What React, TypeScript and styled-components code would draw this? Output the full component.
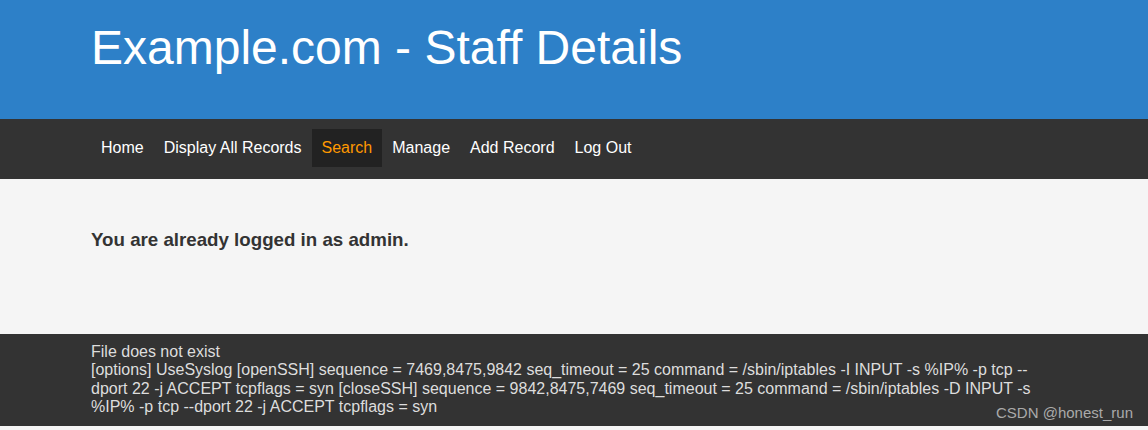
import styled, { createGlobalStyle } from "styled-components";

const GlobalStyle = createGlobalStyle`
  html, body {
    margin: 0;
    padding: 0;
    background: #f5f5f5;
    font-family: "Liberation Sans", Arial, sans-serif;
  }
`;

const Page = styled.div({
  position: "relative",
  minHeight: "430px",
  background: "#f5f5f5",
});

const Container = styled.div({
  padding: "0 90px 0 91px",
});

const Header = styled.header({
  background: "#2d80c8",
  height: "119px",
  boxSizing: "border-box",
  paddingTop: "20px",
});

const Title = styled.h1({
  margin: 0,
  color: "#fff",
  fontSize: "48px",
  fontWeight: "normal",
  lineHeight: "56px",
});

const Nav = styled.nav({
  background: "#333",
  height: "60px",
  boxSizing: "border-box",
  paddingTop: "10px",
});

const NavList = styled.ul({
  listStyle: "none",
  margin: 0,
  padding: 0,
  display: "flex",
});

const NavLink = styled.a<{ $active?: boolean }>`
  display: block;
  padding: 10px 10px;
  line-height: 18px;
  font-size: 16px;
  text-decoration: none;
  color: ${(p) => (p.$active ? "#ff9900" : "#fff")};
  background: ${(p) => (p.$active ? "#222" : "transparent")};
`;

const Main = styled.main({
  height: "155px",
  boxSizing: "border-box",
  paddingTop: "50px",
});

const Message = styled.h3({
  margin: 0,
  fontSize: "18.72px",
  lineHeight: "22px",
  fontWeight: "bold",
  color: "#333",
});

const Footer = styled.footer({
  background: "#333",
  color: "#ddd",
  fontSize: "16px",
  lineHeight: "18.4px",
  padding: "9px 0 9px",
});

const Watermark = styled.span({
  position: "absolute",
  right: "15px",
  bottom: "9px",
  color: "#aaa",
  fontSize: "15px",
  fontFamily: '"Liberation Sans", Arial, sans-serif',
});

const links = ["Home", "Display All Records", "Search", "Manage", "Add Record", "Log Out"];

export default function App() {
  return (
    <Page>
      <GlobalStyle />
      <Header>
        <Container>
          <Title>Example.com - Staff Details</Title>
        </Container>
      </Header>
      <Nav>
        <Container>
          <NavList>
            {links.map((l) => (
              <li key={l}>
                <NavLink href="#" $active={l === "Search"}>
                  {l}
                </NavLink>
              </li>
            ))}
          </NavList>
        </Container>
      </Nav>
      <Main>
        <Container>
          <Message>You are already logged in as admin.</Message>
        </Container>
      </Main>
      <Footer>
        <Container>
          File does not exist
          <br />
          [options] UseSyslog [openSSH] sequence = 7469,8475,9842 seq_timeout = 25 command = /sbin/iptables -I INPUT -s
          %IP% -p tcp --dport 22 -j ACCEPT tcpflags = syn [closeSSH] sequence = 9842,8475,7469 seq_timeout = 25 command =
          /sbin/iptables -D INPUT -s %IP% -p tcp --dport 22 -j ACCEPT tcpflags = syn
        </Container>
      </Footer>
      <Watermark>CSDN @honest_run</Watermark>
    </Page>
  );
}
